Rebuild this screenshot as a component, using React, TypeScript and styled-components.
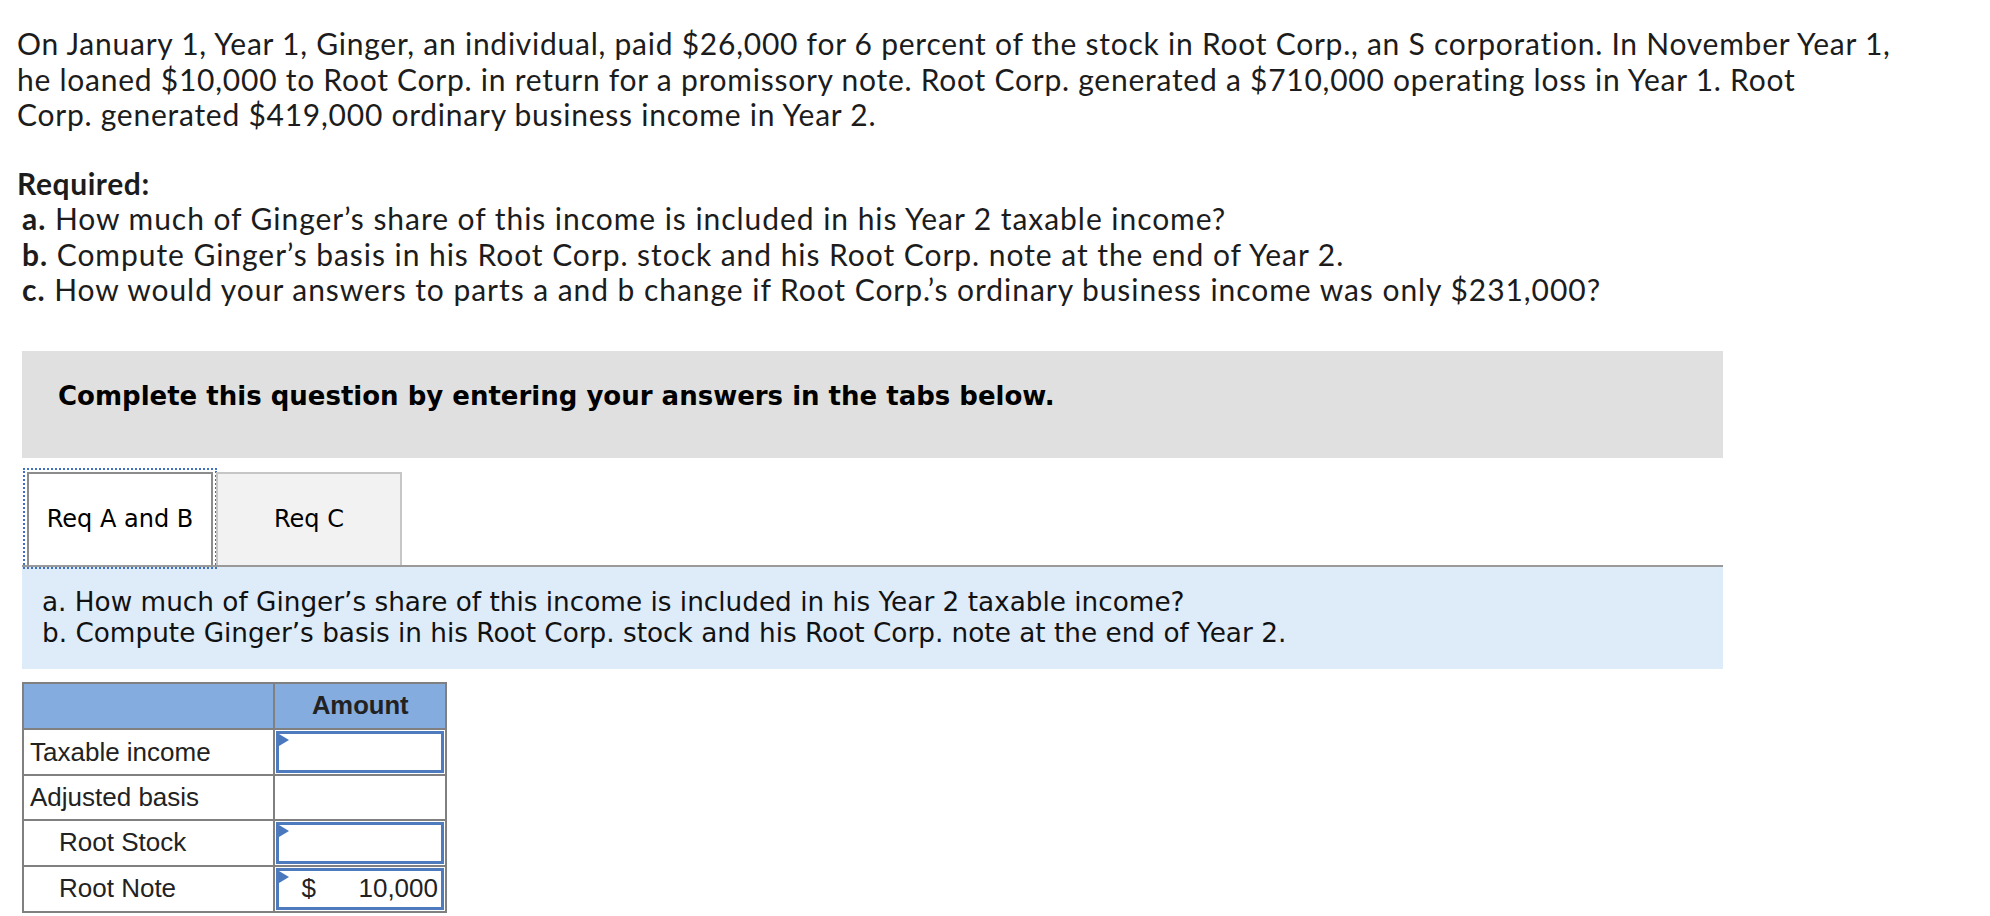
import React from "react";
import styled, { createGlobalStyle } from "styled-components";

const Global = createGlobalStyle`
  html, body { margin: 0; padding: 0; background: #ffffff; }
  body { font-family: "Lato", sans-serif; }
`;

const Page = styled.div`
  box-sizing: border-box;
  width: 1990px;
  padding: 26px 0 0 17px;
`;

const Prose = styled.p`
  margin: 0;
  font-family: "Lato", "Open Sans", sans-serif;
  font-size: 30px;
  letter-spacing: 0.75px;
  line-height: 35.5px;
  color: #1c1c1c;
  white-space: nowrap;
`;

const Required = styled.div`
  margin-top: 33px;
  font-family: "Lato", "Open Sans", sans-serif;
  font-size: 30px;
  letter-spacing: 0.95px;
  line-height: 35.5px;
  color: #1c1c1c;
  white-space: nowrap;
`;

const RequiredTitle = styled.div`
  font-weight: 700;
  letter-spacing: 0.6px;
`;

const Item = styled.div`
  padding-left: 5px;
  b { font-weight: 700; }
`;

const Answer = styled.section`
  margin: 43px 0 0 5px;
  width: 1701px;
`;

const Instruction = styled.div`
  background: #e0e0e0;
  padding: 29px 36px 46px;
  font-family: "DejaVu Sans", Verdana, sans-serif;
  font-weight: 700;
  font-size: 26px;
  line-height: 32px;
  color: #000000;
`;

const TabList = styled.div`
  display: flex;
  align-items: flex-end;
  gap: 3px;
  margin-top: 14px;
  padding-left: 5px;
  border-bottom: 2px solid #9a9a9a;
`;

const Tab = styled.button<{ $active?: boolean }>`
  box-sizing: border-box;
  width: 186px;
  height: 93px;
  margin: 0;
  padding: 0;
  border: 2px solid ${(p) => (p.$active ? "#8c8c8c" : "#c6c6c6")};
  border-bottom: none;
  background: ${(p) => (p.$active ? "#ffffff" : "#f2f2f2")};
  font-family: "DejaVu Sans", Verdana, sans-serif;
  font-size: 24px;
  color: #000000;
  outline: ${(p) => (p.$active ? "2px dotted #3f72c4" : "none")};
  outline-offset: 2px;
  cursor: pointer;
`;

const Prompt = styled.div`
  background: #deebf8;
  padding: 20px 20px 20px;
  font-family: "DejaVu Sans", Verdana, sans-serif;
  font-size: 26.3px;
  line-height: 31px;
  color: #111111;
`;

const Table = styled.table`
  margin-top: 13px;
  border-collapse: collapse;
  width: 425px;
  font-family: "Liberation Sans", Arial, sans-serif;
  font-size: 26px;
  color: #222222;
`;

const HeadCell = styled.th`
  background: #84acdf;
  border: 2px solid #808080;
  height: 44.5px;
  padding: 0;
  font-weight: 700;
  font-size: 25.6px;
  text-align: center;
`;

const LabelCell = styled.td<{ $indent?: boolean }>`
  width: 253px;
  height: 44.5px;
  border: 2px solid #808080;
  padding: 0 0 0 ${(p) => (p.$indent ? "35px" : "6px")};
  box-sizing: border-box;
`;

const ValueCell = styled.td`
  width: 172px;
  height: 44.5px;
  border: 2px solid #808080;
  padding: 1px;
  box-sizing: border-box;
`;

const InputBox = styled.div`
  position: relative;
  box-sizing: border-box;
  height: 42px;
  border: 3px solid #4d7bbd;
  display: flex;
  align-items: center;
  justify-content: space-between;
  padding: 0 3px 0 22px;
  background: #ffffff;
`;

const Flag = styled.span`
  position: absolute;
  top: 0;
  left: 0;
  width: 0;
  height: 0;
  border-left: 10px solid #4a78bf;
  border-top: 6px solid transparent;
  border-bottom: 6px solid transparent;
`;

type Row = { label: string; indent?: boolean; input: boolean; value?: string };

const rows: Row[] = [
  { label: "Taxable income", input: true },
  { label: "Adjusted basis", input: false },
  { label: "Root Stock", indent: true, input: true },
  { label: "Root Note", indent: true, input: true, value: "10,000" },
];

export default function App() {
  return (
    <>
      <Global />
      <Page>
        <Prose>
          On January 1, Year 1, Ginger, an individual, paid $26,000 for 6 percent of the stock in Root Corp., an S corporation. In November Year 1,
          <br />
          he loaned $10,000 to Root Corp. in return for a promissory note. Root Corp. generated a $710,000 operating loss in Year 1. Root
          <br />
          Corp. generated $419,000 ordinary business income in Year 2.
        </Prose>
        <Required>
          <RequiredTitle>Required:</RequiredTitle>
          <Item>
            <b>a.</b> How much of Ginger’s share of this income is included in his Year 2 taxable income?
          </Item>
          <Item>
            <b>b.</b> Compute Ginger’s basis in his Root Corp. stock and his Root Corp. note at the end of Year 2.
          </Item>
          <Item>
            <b>c.</b> How would your answers to parts a and b change if Root Corp.’s ordinary business income was only $231,000?
          </Item>
        </Required>
        <Answer>
          <Instruction>Complete this question by entering your answers in the tabs below.</Instruction>
          <TabList>
            <Tab $active>Req A and B</Tab>
            <Tab>Req C</Tab>
          </TabList>
          <Prompt>
            a. How much of Ginger’s share of this income is included in his Year 2 taxable income?
            <br />
            b. Compute Ginger’s basis in his Root Corp. stock and his Root Corp. note at the end of Year 2.
          </Prompt>
          <Table>
            <thead>
              <tr>
                <HeadCell />
                <HeadCell>Amount</HeadCell>
              </tr>
            </thead>
            <tbody>
              {rows.map((r) => (
                <tr key={r.label}>
                  <LabelCell $indent={r.indent}>{r.label}</LabelCell>
                  <ValueCell>
                    {r.input && (
                      <InputBox>
                        <Flag />
                        {r.value && (
                          <>
                            <span>$</span>
                            <span>{r.value}</span>
                          </>
                        )}
                      </InputBox>
                    )}
                  </ValueCell>
                </tr>
              ))}
            </tbody>
          </Table>
        </Answer>
      </Page>
    </>
  );
}
